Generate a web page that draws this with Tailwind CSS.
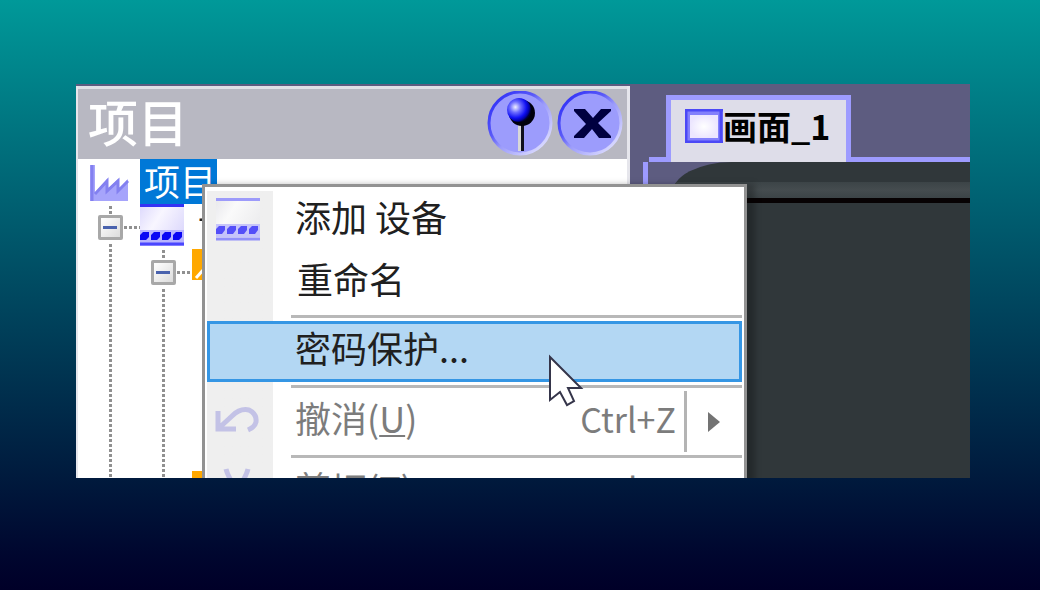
<!DOCTYPE html>
<html lang="zh-CN">
<head>
<meta charset="utf-8">
<title>项目</title>
<script src="https://cdn.jsdelivr.net/npm/@tailwindcss/browser@4"></script>
</head>
<body class="flex h-screen bg-linear-to-b from-[#009999] to-[#000028] pt-[84px] pr-[70px] pb-28 pl-[76px] font-['Noto_Sans_CJK_SC',sans-serif]">
<main class="relative flex min-w-0 flex-1 overflow-hidden bg-[#5d5c80]">

  <!-- Project panel -->
  <section class="mt-0.5 flex w-[554px] shrink-0 flex-col border-r-3 border-l-2 border-[#e6e6ec] bg-white">
    <header class="flex h-[73px] shrink-0 items-center justify-between border-t-3 border-[#e0e0e6] bg-[#b8b8c2] pr-1 pl-2.5">
      <h1 class="pb-2 text-[50px] leading-[60px] font-medium text-white">项目</h1>
      <div class="flex gap-1">
        <button type="button" aria-label="固定" class="size-[66px]">
          <svg viewBox="0 0 66 66" class="size-full">
            <defs>
              <linearGradient id="rim" x1="0.1" y1="0.1" x2="0.9" y2="0.9">
                <stop offset="0" stop-color="#3232f8"/><stop offset="0.35" stop-color="#5a5af8"/><stop offset="0.55" stop-color="#9c9cfa"/><stop offset="1" stop-color="#dcdcff"/>
              </linearGradient>
              <radialGradient id="ball" cx="0.35" cy="0.38" r="0.65">
                <stop offset="0" stop-color="#f0f0ff"/><stop offset="0.35" stop-color="#6c6cff"/><stop offset="0.7" stop-color="#1010f4"/><stop offset="0.9" stop-color="#0000a0"/><stop offset="1" stop-color="#000030"/>
              </radialGradient>
            </defs>
            <circle cx="33" cy="32" r="31" fill="#9c9cfc" stroke="url(#rim)" stroke-width="3"/>
            <rect x="31" y="34" width="3" height="26" fill="#d8d8d8"/>
            <rect x="34" y="34" width="3" height="26" fill="#10101c"/>
            <circle cx="35" cy="22" r="13" fill="#00000c"/>
            <circle cx="32" cy="19" r="12" fill="url(#ball)"/>
          </svg>
        </button>
        <button type="button" aria-label="关闭" class="size-[66px]">
          <svg viewBox="0 0 66 66" class="size-full">
            <circle cx="33" cy="32" r="31" fill="#9c9cfc" stroke="url(#rim)" stroke-width="3"/>
            <path d="M17 18H28L36 27L44 18H54V20L41 32L54 45V47H42L35 38L27 47H17V45L29 33L17 20Z" fill="#000040"/>
          </svg>
        </button>
      </div>
    </header>

    <div class="flex min-h-0 flex-1 flex-col pl-3">
      <div class="flex h-[45px] shrink-0">
        <svg viewBox="0 0 50 45" class="h-[45px] w-[50px]">
          <path d="M0 6H5V34L17 20V31L28 20V31L38 20V42H0Z" fill="#a6a4fb"/>
          <path d="M2 6V42M5 35L17 22V32L28 22V32L38 22" fill="none" stroke="#8380f0" stroke-width="3"/>
        </svg>
        <span class="w-[77px] bg-[#0078d7] pl-1 text-[36px] leading-[42px] text-white">项目</span>
      </div>
      <div class="flex min-h-0 flex-1 pl-2">
        <div class="flex w-6 shrink-0 flex-col items-center">
          <i class="h-[11px] w-[3px] shrink-0 bg-[repeating-linear-gradient(#0000_0_2px,#909090_2px_5px)]"></i>
          <button type="button" aria-label="折叠" class="flex size-[25px] shrink-0 items-center justify-center rounded-xs border-3 border-[#a8a8a8] bg-linear-to-br from-white to-[#dcdcdc]"><i class="h-[3px] w-3.5 bg-[#4a63ae]"></i></button>
          <i class="mt-0.5 w-[3px] flex-1 bg-[repeating-linear-gradient(#0000_0_2px,#909090_2px_5px)]"></i>
        </div>
        <i class="mt-[22px] h-[3px] w-[18px] shrink-0 bg-[repeating-linear-gradient(90deg,#0000_0_2px,#909090_2px_5px)]"></i>
        <div class="flex min-w-0 flex-1 flex-col">
          <div class="flex h-11 shrink-0 gap-3.5">
            <svg viewBox="0 0 44 44" class="size-11">
              <defs><linearGradient id="screen" x1="0" y1="0" x2="1" y2="0.6"><stop offset="0" stop-color="#dcd8fc"/><stop offset="0.45" stop-color="#f8f6ff"/><stop offset="1" stop-color="#dedafc"/></linearGradient></defs>
              <rect width="44" height="42" fill="url(#screen)"/>
              <rect width="44" height="3" fill="#3532f4"/>
              <rect y="26" width="44" height="16" fill="#b8b4ff"/>
              <path d="M0 40H44" stroke="#4a46ff" stroke-width="3"/>
              <path d="M3 28H9V33L6 36H0V31ZM14 28H20V33L17 36H11V31ZM25 28H31V33L28 36H22V31ZM36 28H42V33L39 36H33V31Z" fill="#0a06f4"/>
            </svg>
            <span class="w-[72px] text-[36px] leading-9 text-[#222]">设备</span>
          </div>
          <div class="flex min-h-0 flex-1 pl-[11px]">
            <div class="flex w-6 shrink-0 flex-col items-center">
              <i class="h-3 w-[3px] shrink-0 bg-[repeating-linear-gradient(#0000_0_2px,#909090_2px_5px)]"></i>
              <button type="button" aria-label="折叠" class="flex size-[25px] shrink-0 items-center justify-center rounded-xs border-3 border-[#a8a8a8] bg-linear-to-br from-white to-[#dcdcdc]"><i class="h-[3px] w-3.5 bg-[#4a63ae]"></i></button>
              <i class="mt-0.5 w-[3px] flex-1 bg-[repeating-linear-gradient(#0000_0_2px,#909090_2px_5px)]"></i>
            </div>
            <i class="mt-[23px] h-[3px] w-[17px] shrink-0 bg-[repeating-linear-gradient(90deg,#0000_0_2px,#909090_2px_5px)]"></i>
            <div class="flex flex-col justify-between pt-px">
              <svg viewBox="0 0 40 31" class="h-[31px] w-10"><rect width="40" height="31" fill="#ffa800"/><path d="M4 29L12 20" stroke="#fff" stroke-width="3"/></svg>
              <i class="h-[7px] w-10 bg-[#ffa800]"></i>
            </div>
          </div>
        </div>
      </div>
    </div>
  </section>

  <!-- Editor area -->
  <section class="flex min-w-0 flex-1 flex-col pt-[11px] pl-[13px]">
    <div class="flex h-[67px] shrink-0 items-end pl-1.5">
      <i class="h-[5px] w-[17px] shrink-0 bg-[#9d9bff]"></i>
      <button type="button" class="flex h-[67px] shrink-0 items-start border-x-5 border-t-5 border-[#9d9bff] bg-[#dedde9] pt-[9px] pr-4 pl-3.5">
        <svg viewBox="0 0 38 34" class="h-[34px] w-[38px]">
          <defs><radialGradient id="glow"><stop offset="0" stop-color="#fff"/><stop offset="1" stop-color="#ece6ff"/></radialGradient></defs>
          <rect width="38" height="34" fill="#8380fc"/>
          <path d="M0 1H38M0 33H38M36 0V34M1 0V34" stroke="#4b48f6" stroke-width="3"/>
          <rect x="5" y="6" width="28" height="23" fill="url(#glow)"/>
        </svg>
        <span class="text-[34px] leading-[34px] font-bold text-black">画面_1</span>
      </button>
      <i class="h-[5px] flex-1 bg-[#9d9bff]"></i>
    </div>
    <div class="flex min-h-0 flex-1 border-l-5 border-[#9d9bff] pl-6">
      <div class="flex flex-1 flex-col overflow-hidden rounded-tl-[60px_32px] bg-[#30373a]">
        <i class="mt-5 h-4 bg-linear-to-b from-[#3c4447] via-[#454c4f] to-[#3c4447]"></i>
        <i class="h-[5px] bg-[#070203]"></i>
      </div>
    </div>
  </section>

  <!-- Context menu -->
  <div role="menu" class="absolute top-[100px] left-[126px] w-[545px] border-3 border-b-0 border-[#929292] bg-white pt-1 pr-0.5 pl-0.5 text-[36px] leading-[56px] text-[#202020] shadow-[8px_0_6px_rgba(0,0,0,0.25)]">
    <div class="bg-linear-to-r from-[#efefef] from-[66px] to-white to-[66px]">
      <button type="button" role="menuitem" class="flex h-[62px] w-full items-center">
        <svg viewBox="0 0 66 62" class="h-[62px] w-[66px]">
          <defs><linearGradient id="dim" x1="0" y1="0" x2="1" y2="0.6"><stop offset="0" stop-color="#e8e8ec"/><stop offset="0.4" stop-color="#fafafa"/><stop offset="1" stop-color="#ececee"/></linearGradient></defs>
          <rect x="9" y="7" width="44" height="42" fill="url(#dim)"/>
          <rect x="9" y="7" width="44" height="3" fill="#9d9bfa"/>
          <rect x="9" y="33" width="44" height="13" fill="#c6c4fa"/>
          <path d="M9 48H53" stroke="#9290fa" stroke-width="3"/>
          <path d="M12 35H18V39L15 43H9V38ZM23 35H29V39L26 43H20V38ZM34 35H40V39L37 43H31V38ZM45 35H51V39L48 43H42V38Z" fill="#544ff8"/>
        </svg>
        <span class="pb-3 pl-[22px]">添加 设备</span>
      </button>
      <button type="button" role="menuitem" class="flex h-[62px] w-full items-center pb-3 pl-[90px]">重命名</button>
      <hr class="ml-[84px] h-[3px] border-0 bg-[#b8b8b8]">
      <button type="button" role="menuitem" class="mt-[3px] flex h-[61px] w-full items-center border-3 border-[#3596e4] bg-[#b3d7f3] pb-2.5 pl-[85px]">密码保护...</button>
      <hr class="mt-[3px] ml-[84px] h-[3px] border-0 bg-[#b8b8b8]">
      <button type="button" role="menuitem" class="flex h-[67px] w-full items-center text-[#7c7c7c]">
        <svg viewBox="0 0 66 67" class="h-[67px] w-[66px]" fill="none" stroke="#c3c2e6" stroke-width="5">
          <path d="M11 23V41H29M12 40L25 28Q33 20 42 22Q50 26 49 34Q48 39 41 42"/>
        </svg>
        <span class="flex-1 pb-2.5 pl-[22px] text-left">撤消(<u class="decoration-2 underline-offset-2">U</u>)</span>
        <span class="pb-1.5 text-[34px]">Ctrl+Z</span>
        <i class="ml-2 h-[61px] w-[3px] bg-[#b4b4b4]"></i>
        <svg viewBox="0 0 55 22" class="h-[22px] w-[55px]"><path d="M21 1L33 11L21 21Z" fill="#737373"/></svg>
      </button>
      <hr class="ml-[84px] h-[3px] border-0 bg-[#b8b8b8]">
      <button type="button" role="menuitem" class="flex h-[67px] w-full items-center text-[#7c7c7c]">
        <svg viewBox="0 0 66 67" class="h-[67px] w-[66px]" fill="none" stroke="#c3c2e6" stroke-width="5">
          <path d="M19 11Q21 20 37 43M41 11Q39 20 23 43"/><circle cx="19" cy="48" r="6"/><circle cx="41" cy="48" r="6"/>
        </svg>
        <span class="flex-1 pb-2.5 pl-[22px] text-left">剪切(T)</span>
        <span class="pr-[66px] pb-1.5 text-[34px]">Ctrl+X</span>
      </button>
    </div>
  </div>

  <!-- Mouse pointer over the highlighted item -->
  <svg viewBox="0 0 36 54" class="absolute top-[270px] left-[472px] h-[54px] w-9">
    <path d="M2 3V46L12 38L19 51L26 47L20 34H33Z" fill="#fff" stroke="#35354a" stroke-width="2"/>
  </svg>
</main>
</body>
</html>
